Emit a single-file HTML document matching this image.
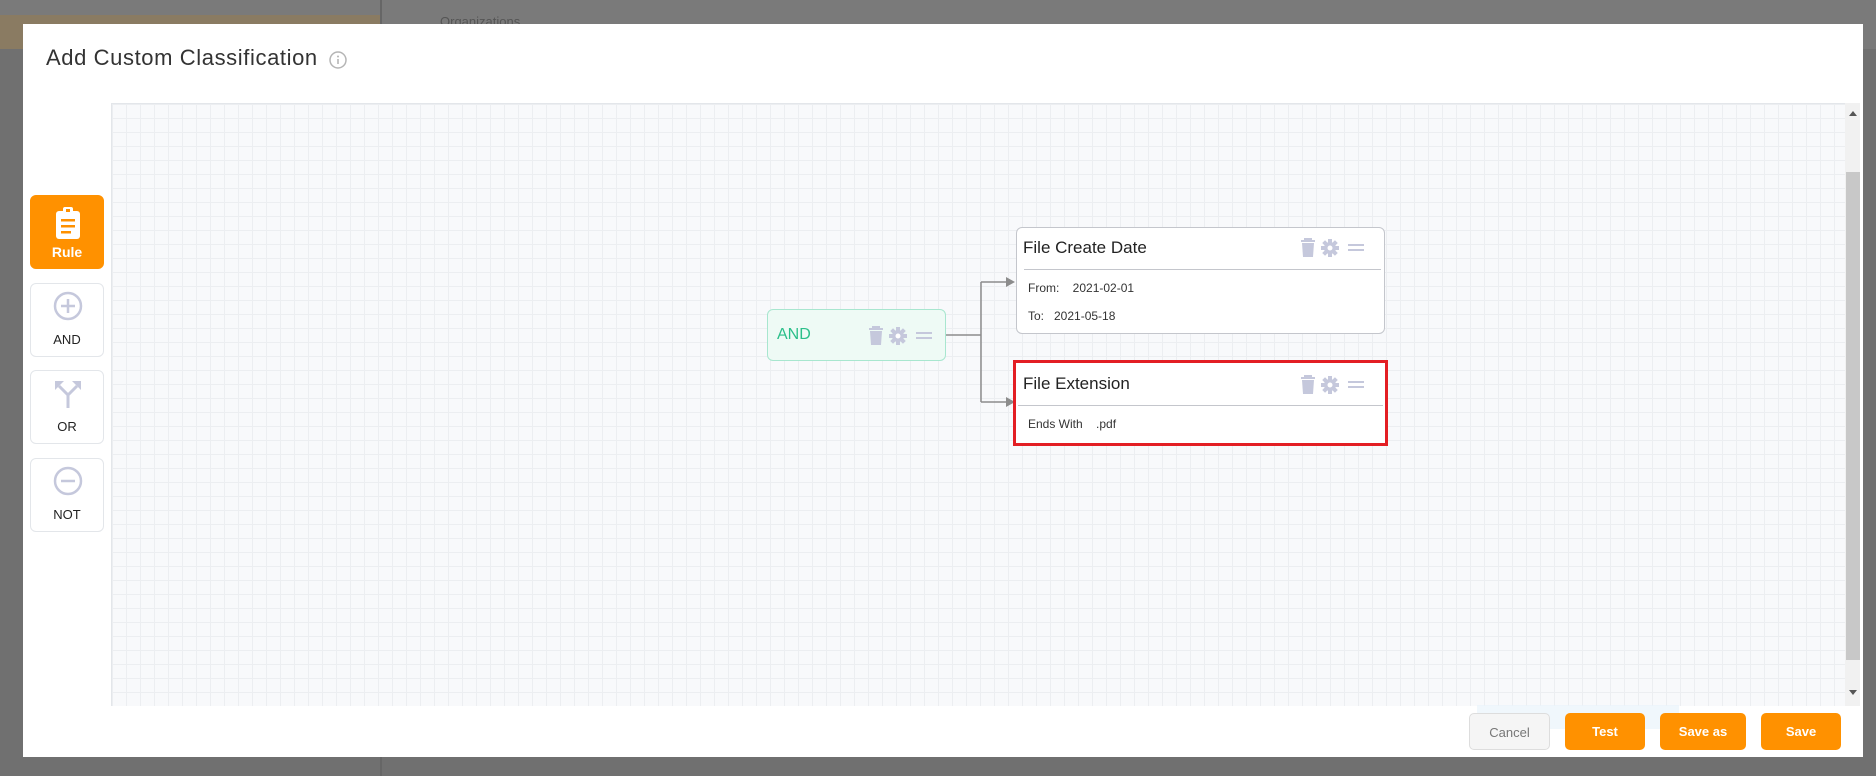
<!DOCTYPE html>
<html><head><meta charset="utf-8"><style>
*{box-sizing:border-box;margin:0;padding:0}
body{width:1876px;height:776px;overflow:hidden;background:#707070;font-family:"Liberation Sans",sans-serif;position:relative}
.abs{position:absolute}
.grid{left:111px;top:103px;width:1734px;height:603px;background-color:#f8f9fb;background-image:linear-gradient(#eceef1 1px,transparent 1px),linear-gradient(90deg,#eceef1 1px,transparent 1px);background-size:14px 14px;border-left:1px solid #e3e6ea;border-top:1px solid #e3e6ea}
.tb{left:30px;width:74px;height:74px;border:1px solid #e3e6ea;border-radius:6px;background:#fff;text-align:center;font-size:13px;color:#222}
.tb span{position:absolute;left:0;right:0;bottom:9px}
.node{background:#fff;border:1px solid #c4c6cc;border-radius:6px}
.btn{top:713px;height:37px;border-radius:5px;background:#ff9100;color:#fff;font-weight:bold;font-size:13px;text-align:center;line-height:37px}
</style></head><body>
<div class="abs" style="left:0;top:0;width:1876px;height:49px;background:#7a7a7a"></div>
<div class="abs" style="left:0;top:15px;width:380px;height:34px;background:#8a7b62"></div>
<div class="abs" style="left:380px;top:0;width:2px;height:776px;background:#666"></div>
<div class="abs" style="left:440px;top:14px;color:#555;font-size:13px">Organizations</div>
<div class="abs" style="left:23px;top:24px;width:1840px;height:733px;background:#fff"></div>
<div class="abs" style="left:46px;top:45px;font-size:22px;color:#333;letter-spacing:0.6px">Add Custom Classification</div>
<svg class="abs" style="left:328px;top:50px" width="20" height="20"><circle cx="10" cy="10" r="8" fill="none" stroke="#b5b5b5" stroke-width="1.5"/><rect x="9.2" y="9" width="1.6" height="5" fill="#b5b5b5"/><circle cx="10" cy="6.5" r="1" fill="#b5b5b5"/></svg>
<div class="abs grid"></div>
<div class="abs" style="left:1845px;top:103px;width:15px;height:603px;background:#f1f1f1"></div>
<div class="abs" style="left:1846px;top:172px;width:14px;height:488px;background:#c8c8c8"></div>
<svg class="abs" style="left:1847px;top:108px" width="12" height="10"><path d="M2 8 L6 3 L10 8Z" fill="#555"/></svg>
<svg class="abs" style="left:1847px;top:688px" width="12" height="10"><path d="M2 2 L6 7 L10 2Z" fill="#555"/></svg>

<div class="abs tb" style="top:195px;background:#ff9100;border-color:#ff9100;color:#fff;font-weight:bold;font-size:14px">
<svg style="position:absolute;left:21px;top:9px" width="32" height="36"><rect x="4" y="6" width="24" height="28" rx="3" fill="#fff"/><rect x="11" y="2" width="10" height="7" rx="2" fill="#fff"/><rect x="14" y="4" width="4" height="3" fill="#ff9100"/><rect x="9" y="14" width="14" height="2.5" fill="#ff9100"/><rect x="9" y="20" width="14" height="2.5" fill="#ff9100"/><rect x="9" y="26" width="10" height="2.5" fill="#ff9100"/></svg>
<span style="bottom:8px">Rule</span></div>
<div class="abs tb" style="top:283px"><svg style="position:absolute;left:22px;top:7px" width="30" height="30"><circle cx="15" cy="15" r="13" fill="none" stroke="#c5c8dc" stroke-width="2.5"/><path d="M15 8V22M8 15H22" stroke="#c5c8dc" stroke-width="2.5"/></svg><span>AND</span></div>
<div class="abs tb" style="top:370px"><svg style="position:absolute;left:22px;top:7px" width="30" height="32"><path d="M15 30V17L6 8M15 17L24 8" fill="none" stroke="#c5c8dc" stroke-width="3"/><path d="M2 3H11L2 12Z M28 3H19L28 12Z" fill="#c5c8dc"/></svg><span>OR</span></div>
<div class="abs tb" style="top:458px"><svg style="position:absolute;left:22px;top:7px" width="30" height="30"><circle cx="15" cy="15" r="13" fill="none" stroke="#c5c8dc" stroke-width="2.5"/><path d="M8 15H22" stroke="#c5c8dc" stroke-width="2.5"/></svg><span>NOT</span></div>

<svg class="abs" style="left:940px;top:270px" width="80" height="140"><path d="M6 65H41M41 12V132M41 12H70M41 132H70" fill="none" stroke="#8c8c8c" stroke-width="1.5"/><path d="M66 7L75 12L66 17Z M66 127L75 132L66 137Z" fill="#8c8c8c"/></svg>

<div class="abs" style="left:767px;top:309px;width:179px;height:52px;background:#eefaf5;border:1.5px solid #a8e6cf;border-radius:6px"></div>
<div class="abs" style="left:777px;top:326px;font-size:16px;color:#2bbf8a">AND</div>

<div class="abs node" style="left:1016px;top:227px;width:369px;height:107px"></div>
<div class="abs" style="left:1024px;top:269px;width:357px;height:1px;background:#c4c6cc"></div>
<div class="abs" style="left:1023px;top:238px;font-size:17px;color:#222">File Create Date</div>
<div class="abs" style="left:1028px;top:281px;font-size:12px;color:#333">From:&nbsp;&nbsp;&nbsp; 2021-02-01</div>
<div class="abs" style="left:1028px;top:309px;font-size:12px;color:#333">To:&nbsp;&nbsp; 2021-05-18</div>

<div class="abs" style="left:1013px;top:360px;width:375px;height:86px;border:3px solid #e31e24;background:#fff"></div>
<div class="abs" style="left:1018px;top:405px;width:365px;height:1px;background:#c4c6cc"></div>
<div class="abs" style="left:1023px;top:374px;font-size:17px;color:#222">File Extension</div>
<div class="abs" style="left:1028px;top:417px;font-size:12px;color:#333">Ends With&nbsp;&nbsp;&nbsp; .pdf</div>

<svg width="0" height="0" style="position:absolute"><defs><g id="icons"><path d="M1 4H15M5 4V2H11V4" stroke="#c5c8dc" stroke-width="2" fill="none"/><path d="M2 6H14L13 20H3Z" fill="#c5c8dc"/><g transform="translate(30 11)" fill="#c5c8dc"><circle r="6"/><g><rect x="-2" y="-9" width="4" height="18"/><rect x="-2" y="-9" width="4" height="18" transform="rotate(45)"/><rect x="-2" y="-9" width="4" height="18" transform="rotate(90)"/><rect x="-2" y="-9" width="4" height="18" transform="rotate(135)"/></g><circle r="2.5" fill="#fff"/></g><path d="M48 8H64M48 13H64" stroke="#c5c8dc" stroke-width="2"/></g></defs></svg>
<svg class="abs" style="left:868px;top:325px" width="70" height="22"><use href="#icons"/></svg>
<svg class="abs" style="left:1300px;top:237px" width="70" height="22"><use href="#icons"/></svg>
<svg class="abs" style="left:1300px;top:374px" width="70" height="22"><use href="#icons"/></svg>

<div class="abs" style="left:1477px;top:705px;width:202px;height:24px;background:#eaf3fb;opacity:.7"></div>
<div class="abs btn" style="left:1469px;width:81px;background:#f5f5f5;border:1px solid #ddd;color:#777;font-weight:normal">Cancel</div>
<div class="abs btn" style="left:1565px;width:80px">Test</div>
<div class="abs btn" style="left:1660px;width:86px">Save as</div>
<div class="abs btn" style="left:1761px;width:80px">Save</div>
</body></html>
